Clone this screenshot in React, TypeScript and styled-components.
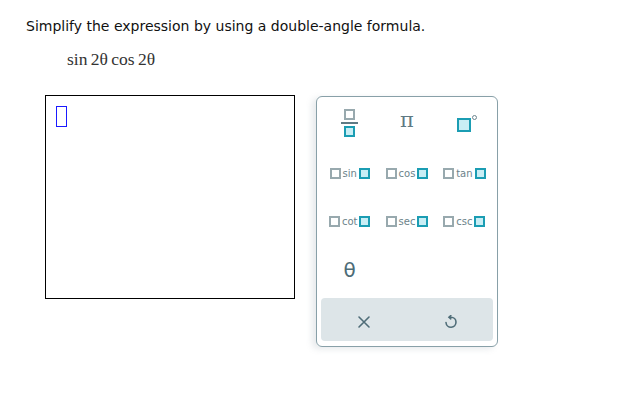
import { FC } from "react";
import styled, { createGlobalStyle } from "styled-components";

const Global = createGlobalStyle`
  html, body { margin: 0; padding: 0; background: #fff; }
  body { width: 626px; height: 407px; overflow: hidden; }
`;

const Page = styled.div`
  padding: 18px 0 0 26px;
  font-family: "DejaVu Sans", Verdana, sans-serif;
`;

const Prompt = styled.div`
  font-size: 14px;
  line-height: 17px;
  color: #111;
`;

const Expr = styled.div`
  margin: 15px 0 0 41px;
  font-family: "Liberation Serif", "DejaVu Serif", "Times New Roman", serif;
  font-size: 17.5px;
  line-height: 19px;
  color: #333;
  word-spacing: -1px;
`;

const Work = styled.div`
  display: flex;
  align-items: flex-start;
  gap: 21px;
  margin: 26px 0 0 19px;
`;

const AnswerBox = styled.div`
  box-sizing: border-box;
  width: 250px;
  height: 204px;
  border: 1.5px solid #000;
  padding: 10px 0 0 10px;
`;

const Cursor = styled.div`
  box-sizing: border-box;
  width: 11px;
  height: 21px;
  border: 1.5px solid #1a1aff;
`;

const Keypad = styled.div`
  box-sizing: border-box;
  margin-top: 1px;
  width: 182px;
  height: 251px;
  border: 1px solid #88a0a8;
  border-radius: 6px;
  box-shadow: -4px 2px 6px rgba(120, 140, 150, 0.18);
  padding: 0 4px 5px 4px;
  display: flex;
  flex-direction: column;
`;

const Grid = styled.div`
  display: grid;
  grid-template-columns: repeat(3, 1fr);
  grid-auto-rows: 48px;
  padding-top: 2px;
  flex: 1;
`;

const Key = styled.div`
  display: flex;
  align-items: center;
  justify-content: center;
  color: #58747e;
`;

const Box = styled.span<{ $filled?: boolean; $size?: number }>`
  box-sizing: border-box;
  display: inline-block;
  width: ${(p) => p.$size ?? 11}px;
  height: ${(p) => p.$size ?? 11}px;
  border: 2px solid ${(p) => (p.$filled ? "#1b9db3" : "#98a9ae")};
  background: ${(p) => (p.$filled ? "#c9eef5" : "#fff")};
`;

const Frac = styled.div`
  display: flex;
  flex-direction: column;
  align-items: center;
  gap: 2px;
`;

const FracBar = styled.span`
  width: 17px;
  height: 2px;
  background: #5f7a84;
`;

const Pi = styled.span`
  font-family: "DejaVu Serif", "Liberation Serif", serif;
  font-size: 21px;
  line-height: 22px;
  color: #5f7a84;
  margin-top: -6px;
`;

const Degree = styled.div`
  display: flex;
  align-items: flex-start;
  margin-top: 4px;
  margin-left: 6px;
`;

const DegMark = styled.span`
  width: 3px;
  height: 3px;
  border: 1px solid #6d868f;
  border-radius: 50%;
  margin: -3px 0 0 1px;
`;

const Trig = styled.div`
  display: flex;
  align-items: center;
  gap: 2px;
  margin-top: 4px;
`;

const TrigName = styled.span`
  font-size: 10px;
  color: #6c838b;
  line-height: 11px;
`;

const Theta = styled.span`
  font-size: 20px;
  line-height: 22px;
  color: #4d6c77;
  margin-top: 6px;
`;

const Footer = styled.div`
  height: 43px;
  border-radius: 4px;
  background: #dde5e8;
  display: grid;
  grid-template-columns: 1fr 1fr;
  align-items: center;
  justify-items: center;
`;

const FooterIcon = styled.svg`
  width: 14px;
  height: 14px;
  stroke: #4f6d78;
  fill: none;
  stroke-width: 1.6;
  stroke-linecap: round;
  margin-top: 4px;
`;

const trig = [["sin", "cos", "tan"], ["cot", "sec", "csc"]];

const TrigKey: FC<{ name: string }> = ({ name }) => (
  <Key>
    <Trig>
      <Box />
      <TrigName>{name}</TrigName>
      <Box $filled />
    </Trig>
  </Key>
);

const App: FC = () => (
  <>
    <Global />
    <Page>
      <Prompt>Simplify the expression by using a double-angle formula.</Prompt>
      <Expr>sin 2θ cos 2θ</Expr>
      <Work>
        <AnswerBox>
          <Cursor />
        </AnswerBox>
        <Keypad>
          <Grid>
            <Key>
              <Frac>
                <Box />
                <FracBar />
                <Box $filled />
              </Frac>
            </Key>
            <Key>
              <Pi>π</Pi>
            </Key>
            <Key>
              <Degree>
                <Box $filled $size={14} />
                <DegMark />
              </Degree>
            </Key>
            {trig.map((row) => row.map((t) => <TrigKey key={t} name={t} />))}
            <Key>
              <Theta>θ</Theta>
            </Key>
          </Grid>
          <Footer>
            <FooterIcon viewBox="0 0 14 14">
              <path d="M2 2 L12 12 M12 2 L2 12" />
            </FooterIcon>
            <FooterIcon viewBox="0 0 14 14">
              <path d="M6.5 2.2 H8 A5 5 0 1 1 3 7.5" />
              <path d="M7.8 0.6 L6 2.2 L7.8 3.8" />
            </FooterIcon>
          </Footer>
        </Keypad>
      </Work>
    </Page>
  </>
);

export default App;
